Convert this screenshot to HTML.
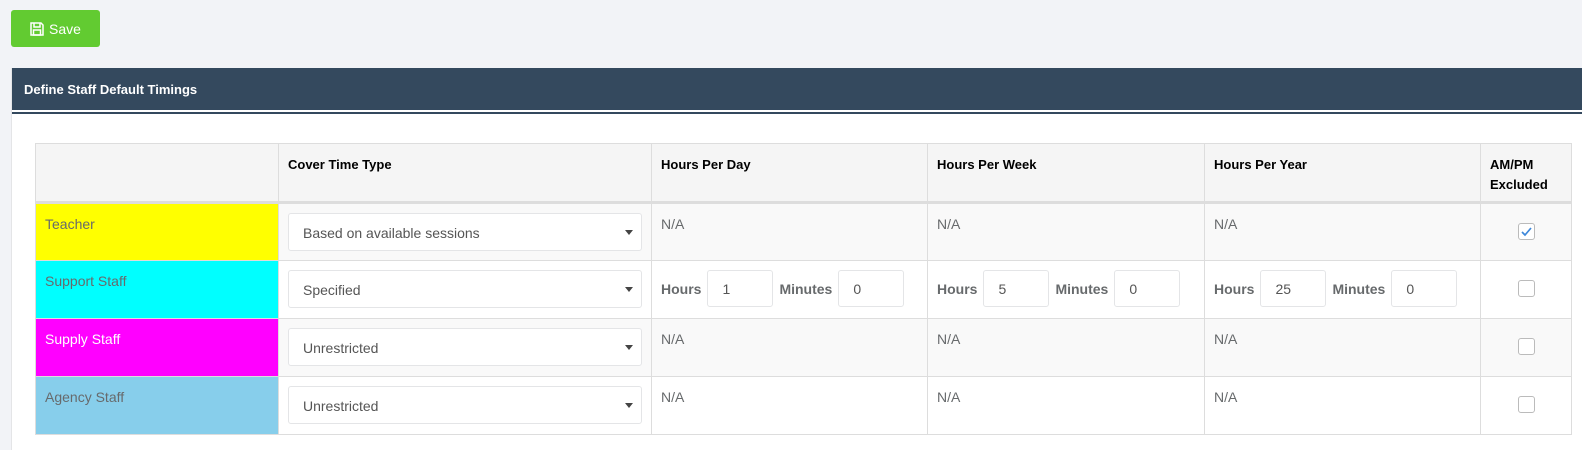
<!DOCTYPE html>
<html><head><style>
*{box-sizing:border-box;margin:0;padding:0}
body{width:1582px;height:450px;background:#f2f3f7;font-family:"Liberation Sans",sans-serif;font-size:14px;color:#676a6c;position:relative;overflow:hidden}
.btn{position:absolute;left:11px;top:10px;width:89px;height:37px;background:#62cb31;border-radius:3px;color:#fff;font-size:14px;display:flex;align-items:center;justify-content:center;gap:5px}
.panel{position:absolute;left:11px;top:68px;right:0;bottom:0;background:#fff;border-left:1px solid #e4e5e7}
.ph{height:44px;background:#34495e;color:#fff;font-weight:bold;font-size:13px;padding:14px 12px;border-bottom:2px solid #fff;box-shadow:0 2px 0 #34495e}
table{position:absolute;left:23px;top:75px;border-collapse:collapse;width:1536px;table-layout:fixed}
td,th{border:1px solid #ddd;vertical-align:top;text-align:left}
th{background:#f5f5f5;color:#000;font-size:13px;font-weight:bold;height:59px;padding:11px 9px 0;line-height:20px;border-bottom:3px solid #ddd}
td{height:58px;padding:12px 9px 0;color:#676a6c}
tr.s td{background:#f9f9f9}
.sel{margin-top:-3px;height:38px;border:1px solid #e4e5e7;border-radius:3px;background:#fff;padding:11px 14px;font-size:14px;color:#555;position:relative}
.sel:after{content:"";position:absolute;right:8px;top:16px;border:4px solid transparent;border-top:5px solid #444;border-bottom:0}
.f{display:flex;align-items:center;gap:6px;margin-top:-3px;font-weight:bold}
.in{width:66px;height:37px;border:1px solid #e4e5e7;border-radius:3px;background:#fff;padding:10px 14px;font-weight:normal;color:#555}
.cb{width:17px;height:17px;border:1px solid #bbb;border-radius:3px;margin:7px auto 0;background:#fff}
</style></head><body>
<div class="btn"><svg width="14" height="14" viewBox="0 0 14 14" fill="none" stroke="#fff" stroke-width="1.5"><path d="M1 1h10l2 2v10H1z"/><path d="M4 1v4h6V1"/><rect x="3.5" y="8" width="7" height="5"/></svg>Save</div>
<div class="panel"><div class="ph">Define Staff Default Timings</div>
<table>
<colgroup><col style="width:243px"><col style="width:373px"><col style="width:276px"><col style="width:277px"><col style="width:276px"><col style="width:91px"></colgroup>
<tr><th></th><th>Cover Time Type</th><th>Hours Per Day</th><th>Hours Per Week</th><th>Hours Per Year</th><th>AM/PM Excluded</th></tr>
<tr class="s"><td style="background:#ff0">Teacher</td><td><div class="sel">Based on available sessions</div></td><td>N/A</td><td>N/A</td><td>N/A</td><td><div class="cb" style="position:relative"><svg width="15" height="15" viewBox="0 0 15 15" style="position:absolute;left:0;top:0"><path d="M3 8l3 3 6-7" stroke="#3d87d9" stroke-width="1.7" fill="none"/></svg></div></td></tr>
<tr><td style="background:#0ff">Support Staff</td><td><div class="sel">Specified</div></td>
<td><div class="f">Hours <div class="in">1</div> Minutes <div class="in">0</div></div></td>
<td><div class="f">Hours <div class="in">5</div> Minutes <div class="in">0</div></div></td>
<td><div class="f">Hours <div class="in">25</div> Minutes <div class="in">0</div></div></td><td><div class="cb"></div></td></tr>
<tr class="s"><td style="background:#f0f;color:#fff">Supply Staff</td><td><div class="sel">Unrestricted</div></td><td>N/A</td><td>N/A</td><td>N/A</td><td><div class="cb"></div></td></tr>
<tr><td style="background:#87ceeb">Agency Staff</td><td><div class="sel">Unrestricted</div></td><td>N/A</td><td>N/A</td><td>N/A</td><td><div class="cb"></div></td></tr>
</table></div>
</body></html>
